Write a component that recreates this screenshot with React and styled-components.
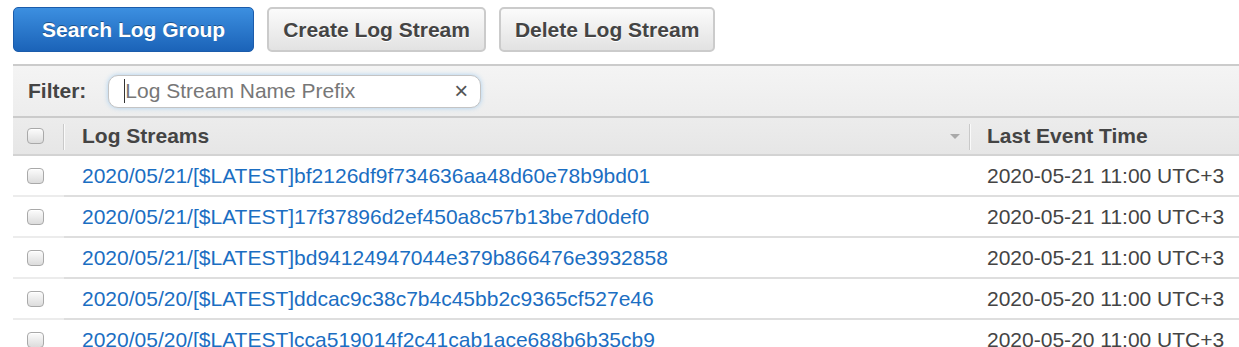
import styled, { createGlobalStyle } from "styled-components";

const GlobalStyle = createGlobalStyle`
  body {
    margin: 0;
    background: #fff;
    font-family: "Liberation Sans", Arial, sans-serif;
  }
`;

const Page = styled.div`
  padding: 7px 0 0 13px;
  width: 1239px;
  box-sizing: border-box;
  overflow: hidden;
`;

const Toolbar = styled.div`
  display: flex;
  gap: 13px;
  margin-bottom: 12px;
`;

const Button = styled.button`
  height: 45px;
  padding: 0 ${(p) => (p.$primary ? "28px" : "14px")};
  min-width: ${(p) => (p.$primary ? "239px" : "0")};
  border-radius: 5px;
  font-family: inherit;
  font-size: 21px;
  font-weight: bold;
  cursor: pointer;
  border: ${(p) => (p.$primary ? "1px solid #1b5cab" : "2px solid #cbcbcb")};
  color: ${(p) => (p.$primary ? "#fff" : "#444")};
  background: ${(p) =>
    p.$primary
      ? "linear-gradient(#3c8fe0, #1b63b8)"
      : "linear-gradient(#fbfbfb, #e2e2e2)"};
  text-shadow: ${(p) =>
    p.$primary ? "0 -1px 0 rgba(0,0,0,0.35)" : "0 1px 0 #fff"};
`;

const FilterBar = styled.div`
  display: flex;
  align-items: center;
  gap: 22px;
  height: 50px;
  padding-left: 15px;
  border-top: 2px solid #cbcbcb;
  border-bottom: 2px solid #cbcbcb;
  background: linear-gradient(#f4f4f4, #ededed);
`;

const Label = styled.span`
  font-size: 21px;
  font-weight: bold;
  color: #444;
`;

const InputWrap = styled.div`
  display: flex;
  align-items: center;
  width: 373px;
  height: 33px;
  box-sizing: border-box;
  padding: 0 12px 0 15px;
  background: #fff;
  border: 1px solid #c4c4c4;
  border-radius: 10px;
  box-shadow: 0 0 5px #a9d0f0;
`;

const Input = styled.input`
  flex: 1;
  border: none;
  outline: none;
  background: transparent;
  font-family: inherit;
  font-size: 21px;
  color: #333;
  padding: 0;
  border-left: 1px solid #333;
  &::placeholder {
    color: #777;
  }
`;

const Clear = styled.span`
  font-size: 24px;
  color: #555;
  line-height: 1;
`;

const Grid = styled.div`
  display: grid;
  grid-template-columns: 51px 906px 269px;
`;

const HeadCell = styled.div`
  position: relative;
  display: flex;
  align-items: center;
  height: 36px;
  padding-left: ${(p) => p.$pad || "17px"};
  padding-right: 10px;
  background: linear-gradient(#ececec, #e6e6e6);
  border-bottom: 2px solid #d3d3d3;
  font-size: 21px;
  font-weight: bold;
  color: #444;
  ${(p) =>
    p.$sep &&
    `&::before {
      content: "";
      position: absolute;
      left: -1px;
      top: 6px;
      bottom: 4px;
      border-left: 1px solid #c9c9c9;
      border-right: 1px solid #fafafa;
    }`}
`;

const Cell = styled.div`
  display: flex;
  align-items: center;
  height: 39px;
  padding-left: ${(p) => p.$pad || "17px"};
  border-bottom: 2px solid ${(p) => (p.$light ? "#ececec" : "#dedede")};
  font-size: 21px;
  color: #444;
  white-space: nowrap;
`;

const StreamLink = styled.a`
  color: #1b6ec2;
  text-decoration: none;
`;

const Check = styled.span`
  display: inline-block;
  width: 15px;
  height: 14px;
  border: 1px solid #a9a9a9;
  border-radius: 4px;
  background: linear-gradient(#fcfcfc, #dcdcdc);
  box-shadow: inset 0 1px 0 #fff;
`;

const SortArrow = styled.span`
  margin-left: auto;
  width: 0;
  height: 0;
  border-left: 5px solid transparent;
  border-right: 5px solid transparent;
  border-top: 5px solid #a9a9a9;
`;

const streams = [
  ["2020/05/21/[$LATEST]bf2126df9f734636aa48d60e78b9bd01", "2020-05-21 11:00 UTC+3"],
  ["2020/05/21/[$LATEST]17f37896d2ef450a8c57b13be7d0def0", "2020-05-21 11:00 UTC+3"],
  ["2020/05/21/[$LATEST]bd94124947044e379b866476e3932858", "2020-05-21 11:00 UTC+3"],
  ["2020/05/20/[$LATEST]ddcac9c38c7b4c45bb2c9365cf527e46", "2020-05-20 11:00 UTC+3"],
  ["2020/05/20/[$LATEST]cca519014f2c41cab1ace688b6b35cb9", "2020-05-20 11:00 UTC+3"],
];

function App() {
  return (
    <Page>
      <GlobalStyle />
      <Toolbar>
        <Button $primary>Search Log Group</Button>
        <Button>Create Log Stream</Button>
        <Button>Delete Log Stream</Button>
      </Toolbar>
      <FilterBar>
        <Label>Filter:</Label>
        <InputWrap>
          <Input placeholder="Log Stream Name Prefix" />
          <Clear>×</Clear>
        </InputWrap>
      </FilterBar>
      <Grid>
        <HeadCell $pad="14px">
          <Check />
        </HeadCell>
        <HeadCell $sep $pad="18px">
          Log Streams
          <SortArrow />
        </HeadCell>
        <HeadCell $sep>Last Event Time</HeadCell>
        {streams.map(([name, time]) => (
          <>
            <Cell key={name + "c"} $pad="14px" $light>
              <Check />
            </Cell>
            <Cell key={name} $pad="18px">
              <StreamLink href="#">{name}</StreamLink>
            </Cell>
            <Cell key={name + "t"}>{time}</Cell>
          </>
        ))}
      </Grid>
    </Page>
  );
}

export default App;
